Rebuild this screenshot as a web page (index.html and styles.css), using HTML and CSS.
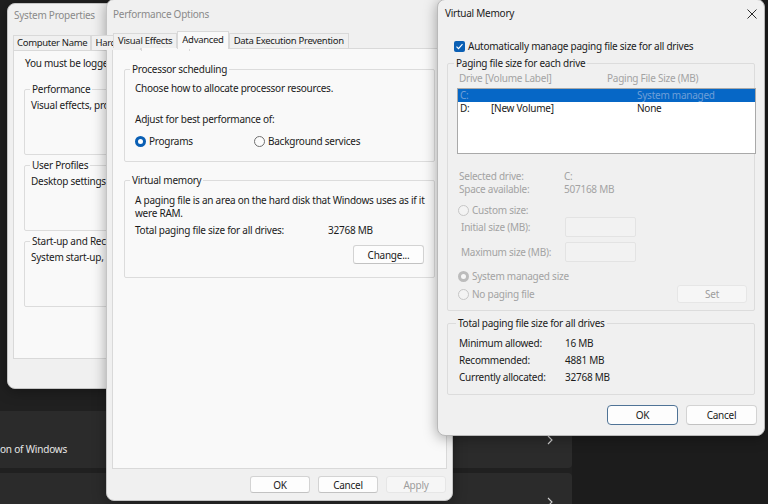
FILE: index.html
```html
<!DOCTYPE html>
<html>
<head>
<meta charset="utf-8">
<title>Virtual Memory</title>
<link rel="stylesheet" href="styles.css">
</head>
<body>

<!-- settings app behind the dialogs -->
<div class="settings">
  <div class="srow srow-a">
    <span class="srow-text">on of Windows</span>
    <svg class="chev" width="6" height="10" viewBox="0 0 6 10"><path d="M1 1l4 4-4 4" fill="none" stroke="#cfcfcf" stroke-width="1.1"/></svg>
  </div>
  <div class="srow srow-b">
    <span class="srow-text"></span>
    <svg class="chev" width="6" height="10" viewBox="0 0 6 10"><path d="M1 1l4 4-4 4" fill="none" stroke="#cfcfcf" stroke-width="1.1"/></svg>
  </div>
</div>

<!-- System Properties -->
<div class="win sysprop">
  <div class="title">System Properties</div>
  <div class="tabs">
    <span class="tab">Computer Name</span><span class="tab">Hardware</span><span class="tab sel">Advanced</span>
  </div>
  <div class="panel">
    <p class="line">You must be logged on as an Administrator to make most of these changes.</p>
    <fieldset class="grp sp-grp">
      <legend>Performance</legend>
      <p class="line">Visual effects, processor scheduling, memory usage and virtual memory</p>
    </fieldset>
    <fieldset class="grp sp-grp">
      <legend>User Profiles</legend>
      <p class="line">Desktop settings related to your sign-in</p>
    </fieldset>
    <fieldset class="grp sp-grp">
      <legend>Start-up and Recovery</legend>
      <p class="line">System start-up, system failure and debugging information</p>
    </fieldset>
  </div>
</div>

<!-- Performance Options -->
<div class="win perf">
  <div class="title">Performance Options</div>
  <div class="tabs">
    <span class="tab">Visual Effects</span><span class="tab sel">Advanced</span><span class="tab">Data Execution Prevention</span>
  </div>
  <div class="panel">
    <fieldset class="grp po-proc">
      <legend>Processor scheduling</legend>
      <p class="line">Choose how to allocate processor resources.</p>
      <p class="line adjust">Adjust for best performance of:</p>
      <div class="radios">
        <label class="radio on prog"><i></i>Programs</label>
        <label class="radio"><i></i>Background services</label>
      </div>
    </fieldset>
    <fieldset class="grp po-vm">
      <legend>Virtual memory</legend>
      <p class="line">A paging file is an area on the hard disk that Windows uses as if it<br>were RAM.</p>
      <div class="kv po-total"><span class="k">Total paging file size for all drives:</span><span>32768 MB</span></div>
      <div class="btn-row"><button class="btn change">Change...</button></div>
    </fieldset>
  </div>
  <div class="footer">
    <button class="btn">OK</button><button class="btn">Cancel</button><button class="btn dis">Apply</button>
  </div>
</div>

<!-- Virtual Memory -->
<div class="win vm">
  <div class="title active">
    <span>Virtual Memory</span>
    <svg class="close" width="10" height="10" viewBox="0 0 10 10"><path d="M0.5 0.5l9 9M9.5 0.5l-9 9" stroke="#2b2b2b" stroke-width="1"/></svg>
  </div>
  <div class="vm-body">
    <label class="check"><i><svg width="9" height="9" viewBox="0 0 9 9"><path d="M1.5 4.6l2 2 4-4.4" fill="none" stroke="#fff" stroke-width="1.2"/></svg></i>Automatically manage paging file size for all drives</label>

    <fieldset class="grp vm-g1">
      <legend>Paging file size for each drive</legend>
      <div class="cols dim"><span class="c1">Drive</span><span class="c2">[Volume Label]</span><span class="c3">Paging File Size (MB)</span></div>
      <div class="list">
        <div class="li sel"><span class="c1">C:</span><span class="c2"></span><span class="c3">System managed</span></div>
        <div class="li"><span class="c1">D:</span><span class="c2">[New Volume]</span><span class="c3">None</span></div>
      </div>
      <div class="kv dim drive-info"><span class="k">Selected drive:</span><span>C:</span></div>
      <div class="kv dim"><span class="k">Space available:</span><span>507168 MB</span></div>
      <label class="radio dis custom"><i></i>Custom size:</label>
      <div class="field dim"><span class="k">Initial size (MB):</span><span class="input"></span></div>
      <div class="field dim max"><span class="k">Maximum size (MB):</span><span class="input"></span></div>
      <div class="radio-set">
        <div class="stack">
          <label class="radio dis on"><i></i>System managed size</label>
          <label class="radio dis"><i></i>No paging file</label>
        </div>
        <button class="btn dis set">Set</button>
      </div>
    </fieldset>

    <fieldset class="grp vm-g2">
      <legend>Total paging file size for all drives</legend>
      <div class="kv"><span class="k">Minimum allowed:</span><span>16 MB</span></div>
      <div class="kv"><span class="k">Recommended:</span><span>4881 MB</span></div>
      <div class="kv"><span class="k">Currently allocated:</span><span>32768 MB</span></div>
    </fieldset>

    <div class="footer">
      <button class="btn focus">OK</button><button class="btn">Cancel</button>
    </div>
  </div>
</div>

</body>
</html>
```

FILE: styles.css
```css
* {
  box-sizing: border-box;
}

body {
  margin: 0;
  width: 768px;
  height: 504px;
  overflow: hidden;
  position: relative;
  background: #1c1c1c;
  font-family: "Noto Sans", sans-serif;
  font-size: 10px;
  letter-spacing: -0.25px;
  color: #1b1b1b;
}

p {
  margin: 0;
}

.line {
  line-height: 13px;
  white-space: nowrap;
}

/* background settings app */
.settings {
  position: absolute;
  left: 0;
  top: 0;
  width: 572px;
  height: 504px;
  overflow: hidden;
  background: #202020;
  padding-top: 411px;
  display: flex;
  flex-direction: column;
  gap: 5px;
}

.srow {
  background: #2b2b2b;
  height: 57px;
  flex: none;
  border-radius: 0 4px 4px 0;
  display: flex;
  align-items: center;
  justify-content: space-between;
  padding-right: 19px;
  color: #e6e6e6;
  font-size: 10px;
  letter-spacing: -0.2px;
}

.srow-text {
  padding-top: 19px;
}

/* dialogs */
.win {
  position: absolute;
  background: #f0f0f0;
  border: 1px solid #c4c4c4;
  border-radius: 8px;
  box-shadow: 0 2px 14px rgba(0, 0, 0, 0.35);
  display: flex;
  flex-direction: column;
}

.title {
  height: 26px;
  line-height: 26px;
  padding-left: 6px;
  color: #8a8a8a;
  flex: none;
}

.title.active {
  color: #1b1b1b;
  display: flex;
  justify-content: space-between;
  align-items: center;
  padding-right: 7px;
}

.tabs {
  display: flex;
  align-items: flex-end;
  height: 18px;
  margin-top: 4px;
  padding-left: 6px;
  position: relative;
  z-index: 1;
  flex: none;
  font-size: 9.5px;
  letter-spacing: -0.3px;
}

.tab {
  height: 15px;
  line-height: 14px;
  padding: 0 4px;
  border: 1px solid #d9d9d9;
  border-bottom: none;
  background: #f0f0f0;
  white-space: nowrap;
}

.tab.sel {
  height: 18px;
  line-height: 15px;
  padding: 0 4px;
  background: #f9f9f9;
  margin-bottom: -1px;
}

.panel {
  background: #f9f9f9;
  border: 1px solid #d9d9d9;
  margin: 0 5px;
  flex: none;
}

.grp {
  border: 1px solid #dcdcdc;
  border-radius: 2px;
  margin: 0;
  padding: 0 10px;
  min-width: 0;
}

.grp legend {
  padding: 0 2px;
  margin-left: -4px;
  line-height: 13px;
  white-space: nowrap;
}

.btn {
  font: inherit;
  letter-spacing: inherit;
  color: #1b1b1b;
  background: #fdfdfd;
  border: 1px solid #d3d3d3;
  border-bottom-color: #c2c2c2;
  border-radius: 3px;
  height: 17px;
  padding: 0;
  line-height: 14px;
}

.btn.dis {
  background: #f6f6f6;
  border-color: #e6e6e6;
  color: #9d9d9d;
}

.btn.focus {
  border: 1px solid #4f7396;
}

.footer {
  display: flex;
  justify-content: flex-end;
  gap: 8px;
}

.kv, .field {
  display: flex;
  white-space: nowrap;
}

.dim {
  color: #a3a3a3;
}

.radio, .check {
  display: flex;
  align-items: center;
  white-space: nowrap;
}

.radio i {
  width: 11px;
  height: 11px;
  border-radius: 50%;
  border: 1px solid #6f6f6f;
  background: #fbfbfb;
  margin-right: 3px;
  flex: none;
}

.radio.on i {
  border: 3px solid #0a5fb4;
  background: #fff;
}

.radio.dis {
  color: #a3a3a3;
}

.radio.dis i {
  border-color: #c6c6c6;
  background: #f3f3f3;
}

.radio.dis.on i {
  border: 3px solid #bcbcbc;
  background: #f7f7f7;
}

/* System Properties */
.sysprop {
  left: 7px;
  top: 3px;
  width: 330px;
  height: 386px;
}

.sysprop .title {
  height: 22px;
  line-height: 22px;
}

.sysprop .tabs {
  margin-top: 6px;
  padding-left: 5px;
}

.sysprop .tab {
  padding: 0 3px;
}

.sysprop .panel {
  height: 309px;
  padding: 6px 10px 0;
}

.sysprop .panel > .line {
  padding-left: 1px;
}

.sp-grp {
  height: 72px;
  margin-top: 4px;
  padding: 3px 6px 0;
}

.sp-grp:first-of-type {
  margin-top: 13px;
}

.sp-grp legend {
  margin-left: -1px;
}

/* Performance Options */
.perf {
  left: 106px;
  top: -1px;
  width: 347px;
  height: 502px;
}

.perf .title {
  line-height: 28px;
  height: 26px;
}

.perf .panel {
  height: 421px;
  padding: 14px 11px 0;
}

.po-proc {
  padding: 6px 10px 13px;
}

.po-proc legend,
.po-vm legend {
  margin-left: -5px;
}

.adjust {
  margin-top: 18px;
}

.radios {
  display: flex;
  margin-top: 9px;
  line-height: 13px;
}

.prog {
  width: 119px;
}

.po-vm {
  margin-top: 12px;
  padding: 7px 10px 13px;
}

.po-total {
  margin-top: 4px;
  line-height: 13px;
}

.po-total .k {
  width: 193px;
}

.btn-row {
  display: flex;
  justify-content: flex-end;
  margin-top: 8px;
}

.change {
  width: 71px;
  height: 19px;
}

.perf .footer {
  padding: 7px 6px 0 0;
}

.perf .footer .btn {
  width: 60px;
  height: 17px;
}

/* Virtual Memory */
.vm {
  left: 437px;
  top: -1px;
  width: 328px;
  height: 437px;
  border-color: #b9b9b9;
}

.vm .title {
  height: 27px;
  line-height: 27px;
  padding-left: 7px;
}

.vm-body {
  padding: 13px 9px 0 9px;
}

.check {
  line-height: 13px;
  margin-left: 7px;
}

.check i {
  width: 11px;
  height: 11px;
  border-radius: 2px;
  background: #0a5fb4;
  margin-right: 3px;
  display: flex;
  align-items: center;
  justify-content: center;
}

.vm-g1 {
  margin-top: 4px;
  width: 308px;
  padding: 2px 0 7px 9px;
}

.vm-g1 legend,
.vm-g2 legend {
  margin-left: -3px;
}

.cols {
  display: flex;
  line-height: 13px;
  white-space: nowrap;
}

.c1 {
  width: 28px;
  padding-left: 2px;
}

.cols .c2 {
  width: 122px;
}

.list {
  margin-top: 3px;
  width: 299px;
  height: 66px;
  background: #fff;
  border: 1px solid #a9a9a9;
}

.li {
  display: flex;
  line-height: 13px;
  height: 13px;
  white-space: nowrap;
}

.li .c1 {
  width: 33px;
}

.li .c2 {
  width: 146px;
}

.li.sel {
  background: #0667c6;
  color: #6e9fd8;
}

.drive-info {
  margin-top: 16px;
}

.vm-g1 .kv {
  line-height: 13px;
  padding-left: 2px;
}

.vm-g1 .kv .k {
  width: 105px;
}

.custom {
  margin-top: 8px;
  line-height: 13px;
  padding-left: 1px;
}

.field {
  align-items: center;
  height: 20px;
  padding-left: 4px;
}

.field .k {
  width: 104px;
}

.field.max {
  margin-top: 5px;
}

.input {
  width: 71px;
  height: 20px;
  border: 1px solid #e3e3e3;
  background: #f2f2f2;
  border-radius: 2px;
}

.radio-set {
  display: flex;
  justify-content: space-between;
  align-items: flex-end;
  margin-top: 5px;
  padding-right: 7px;
}

.stack .radio {
  height: 18px;
  padding-left: 1px;
}

.set {
  width: 70px;
  height: 18px;
  color: #7a7a7a;
}

.vm-g2 {
  margin-top: 6px;
  width: 308px;
  padding: 5px 0 8px 11px;
}

.vm-g2 .kv {
  line-height: 17px;
}

.vm-g2 .kv .k {
  width: 106px;
}

.vm .footer {
  margin-top: 10px;
  margin-right: -2px;
}

.vm .footer .btn {
  width: 71px;
  height: 20px;
  border-radius: 4px;
}
```
